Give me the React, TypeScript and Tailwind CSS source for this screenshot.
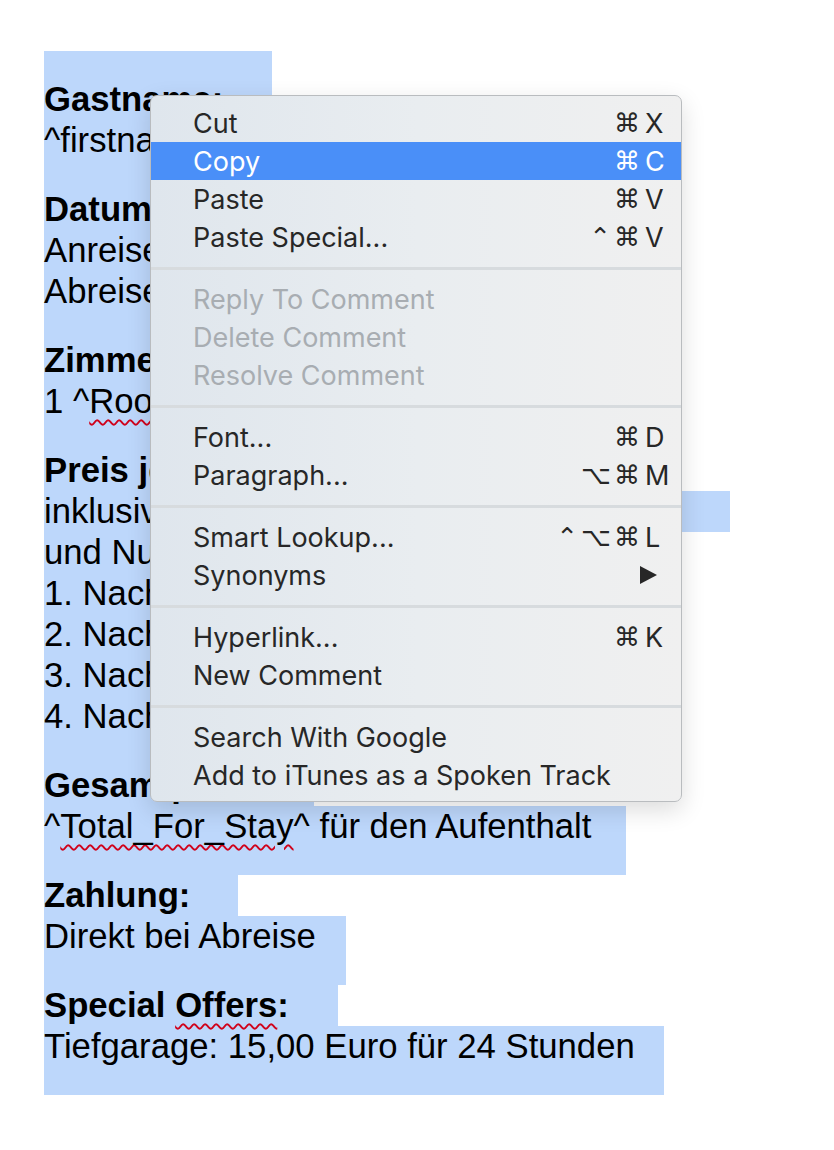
const docFont = { fontFamily: '"Liberation Sans", Arial, sans-serif' };
const menuFont = { fontFamily: 'Inter, "DejaVu Sans", sans-serif' };

type Line = { text: React.ReactNode; bold?: boolean; w: number };

const wavy = "underline decoration-wavy decoration-[#d0021b] decoration-[1.5px] underline-offset-[6px]";

const paragraphs: Line[][] = [
  [
    { text: "Gastname:", bold: true, w: 228 },
    { text: "^firstname^ ^lastname^", w: 420 },
  ],
  [
    { text: "Datum:", bold: true, w: 160 },
    { text: "Anreise: ^Arrival_Date^", w: 420 },
    { text: "Abreise: ^Departure_Date^", w: 450 },
  ],
  [
    { text: "Zimmer:", bold: true, w: 180 },
    {
      text: (
        <>
          1 ^<span className={wavy}>Room_Type</span>^
        </>
      ),
      w: 300,
    },
  ],
  [
    { text: "Preis je Nacht:", bold: true, w: 300 },
    { text: "inklusive Frühstück und Mehrwertsteuer", w: 686 },
    { text: "und Nutzung des Wellnessbereichs", w: 560 },
    { text: "1. Nacht: ^Rate_1^ Euro", w: 400 },
    { text: "2. Nacht: ^Rate_2^ Euro", w: 400 },
    { text: "3. Nacht: ^Rate_3^ Euro", w: 400 },
    { text: "4. Nacht: ^Rate_4^ Euro", w: 400 },
  ],
  [
    { text: "Gesamtpreis:", bold: true, w: 270 },
    {
      text: (
        <>
          ^<span className={wavy}>Total_For_Stay</span>^ für den Aufenthalt
        </>
      ),
      w: 582,
    },
  ],
  [
    { text: "Zahlung:", bold: true, w: 194 },
    { text: "Direkt bei Abreise", w: 302 },
  ],
  [
    {
      text: (
        <>
          Special <span className={wavy}>Offers</span>:
        </>
      ),
      bold: true,
      w: 294,
    },
    { text: "Tiefgarage: 15,00 Euro für 24 Stunden", w: 620 },
  ],
];

type Item = { label: string; mods?: string; key?: string; disabled?: boolean; active?: boolean; submenu?: boolean };

const groups: Item[][] = [
  [
    { label: "Cut", mods: "⌘", key: "X" },
    { label: "Copy", mods: "⌘", key: "C", active: true },
    { label: "Paste", mods: "⌘", key: "V" },
    { label: "Paste Special...", mods: "⌃⌘", key: "V" },
  ],
  [
    { label: "Reply To Comment", disabled: true },
    { label: "Delete Comment", disabled: true },
    { label: "Resolve Comment", disabled: true },
  ],
  [
    { label: "Font...", mods: "⌘", key: "D" },
    { label: "Paragraph...", mods: "⌥⌘", key: "M" },
  ],
  [
    { label: "Smart Lookup...", mods: "⌃⌥⌘", key: "L" },
    { label: "Synonyms", submenu: true },
  ],
  [
    { label: "Hyperlink...", mods: "⌘", key: "K" },
    { label: "New Comment" },
  ],
  [
    { label: "Search With Google" },
    { label: "Add to iTunes as a Spoken Track" },
  ],
];

function MenuRow({ item }: { item: Item }) {
  const color = item.active ? "text-white bg-[#4a8ff8]" : item.disabled ? "text-[#a8adb2]" : "text-[#272727]";
  return (
    <div className={`flex items-center h-[38px] pl-[42px] pr-[4px] text-[27px] ${color}`}>
      <span className="flex-1 leading-none">{item.label}</span>
      {item.mods && (
        <span className="leading-none text-right text-[26px] tracking-[3px]" style={{ fontFamily: '"DejaVu Sans", sans-serif' }}>
          {item.mods}
        </span>
      )}
      {item.key && <span className="w-[32px] ml-[2px] leading-none">{item.key}</span>}
      {item.submenu && (
        <svg width="17" height="18" viewBox="0 0 17 18" className="mr-[20px]">
          <path d="M0 0 L17 9 L0 18 Z" fill="#272727" />
        </svg>
      )}
    </div>
  );
}

function ContextMenu() {
  return (
    <div
      className="absolute left-[150px] top-[95px] w-[532px] h-[707px] rounded-[7px] border border-[#b9bcbf] bg-linear-to-r from-[#dfe6ed] via-[#e9edf0] to-[#f0f0f0] shadow-[0_8px_24px_rgba(0,0,0,0.14)] pt-[8px] overflow-hidden"
      style={menuFont}
    >
      {groups.map((g, gi) => (
        <div key={gi}>
          {gi > 0 && (
            <div className="h-[24px] flex items-center">
              <div className="h-[3px] w-full bg-[#d7dbde]" />
            </div>
          )}
          {g.map((it) => (
            <MenuRow key={it.label} item={it} />
          ))}
        </div>
      ))}
    </div>
  );
}

export default function App() {
  return (
    <div className="relative w-[834px] h-[1150px] bg-white overflow-hidden text-black" style={docFont}>
      <div className="pt-[51px] pl-[44px]">
        <div className="h-[28px] w-[228px] bg-[#bdd7fb]" />
        {paragraphs.map((p, pi) => (
          <div key={pi}>
            {p.map((l, li) => {
              const last = li === p.length - 1;
              return (
                <div
                  key={li}
                  className={`bg-[#bdd7fb] whitespace-nowrap text-[34.7px] leading-[41px] ${last ? "pb-[28px]" : ""} ${l.bold ? "font-bold" : ""}`}
                  style={{ width: l.w }}
                >
                  {l.text}
                </div>
              );
            })}
          </div>
        ))}
      </div>
      <ContextMenu />
    </div>
  );
}
